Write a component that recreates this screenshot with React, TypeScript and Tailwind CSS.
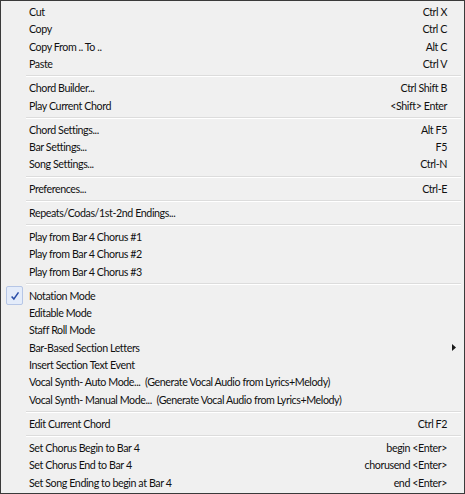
import React from "react";

type Item = { label: string; shortcut?: string; checked?: boolean; submenu?: boolean };
type Group = Item[];

const groups: Group[] = [
  [
    { label: "Cut", shortcut: "Ctrl X" },
    { label: "Copy", shortcut: "Ctrl C" },
    { label: "Copy From .. To ..", shortcut: "Alt C" },
    { label: "Paste", shortcut: "Ctrl V" },
  ],
  [
    { label: "Chord Builder...", shortcut: "Ctrl Shift B" },
    { label: "Play Current Chord", shortcut: "<Shift> Enter" },
  ],
  [
    { label: "Chord Settings...", shortcut: "Alt F5" },
    { label: "Bar Settings...", shortcut: "F5" },
    { label: "Song Settings...", shortcut: "Ctrl-N" },
  ],
  [{ label: "Preferences...", shortcut: "Ctrl-E" }],
  [{ label: "Repeats/Codas/1st-2nd Endings..." }],
  [
    { label: "Play from Bar 4 Chorus #1" },
    { label: "Play from Bar 4 Chorus #2" },
    { label: "Play from Bar 4 Chorus #3" },
  ],
  [
    { label: "Notation Mode", checked: true },
    { label: "Editable Mode" },
    { label: "Staff Roll Mode" },
    { label: "Bar-Based Section Letters", submenu: true },
    { label: "Insert Section Text Event" },
    { label: "Vocal Synth- Auto Mode...  (Generate Vocal Audio from Lyrics+Melody)" },
    { label: "Vocal Synth- Manual Mode...  (Generate Vocal Audio from Lyrics+Melody)" },
  ],
  [{ label: "Edit Current Chord", shortcut: "Ctrl F2" }],
  [
    { label: "Set Chorus Begin to Bar 4", shortcut: "begin <Enter>" },
    { label: "Set Chorus End to Bar 4", shortcut: "chorusend <Enter>" },
    { label: "Set Song Ending to begin at Bar 4", shortcut: "end <Enter>" },
  ],
];

function Row({ item }: { item: Item }) {
  return (
    <div className="relative flex h-[17.35px] items-center pl-[28px] pr-[17px]">
      {item.checked && (
        <div className="absolute left-[5px] top-[-1px] flex h-[19px] w-[17px] items-center justify-center rounded-[2px] border border-[#b6c6e6] bg-[#e4ecfa]">
          <svg width="10" height="10" viewBox="0 0 10 10">
            <path d="M1.6 5.4 L3.9 8 L8.5 1.4" fill="none" stroke="#2a4ea8" strokeWidth="1.5" />
          </svg>
        </div>
      )}
      <span className="flex-1 whitespace-pre">{item.label}</span>
      {item.shortcut && <span className="whitespace-pre">{item.shortcut}</span>}
      {item.submenu && (
        <svg className="absolute right-[8px] top-[5px]" width="4" height="7" viewBox="0 0 4 7">
          <path d="M0 0 L4 3.5 L0 7 Z" fill="#1a1a1a" />
        </svg>
      )}
    </div>
  );
}

function Separator() {
  return (
    <div className="flex h-[6.8px] flex-col justify-center pl-[25px] pr-[3px]">
      <div className="h-px bg-[#dcdcdc]" />
      <div className="h-px bg-white" />
    </div>
  );
}

export default function App() {
  return (
    <div
      className="h-[494px] w-[465px] border border-[#3a3a3a] bg-[#f0f0f0] py-[2.5px] text-[10.7px] tracking-[-0.42px] text-[#111111]"
      style={{ fontFamily: 'Lato, "Noto Sans", sans-serif' }}
    >
      {groups.map((g, gi) => (
        <React.Fragment key={gi}>
          {gi > 0 && <Separator />}
          {g.map((it, ii) => (
            <Row key={ii} item={it} />
          ))}
        </React.Fragment>
      ))}
    </div>
  );
}
